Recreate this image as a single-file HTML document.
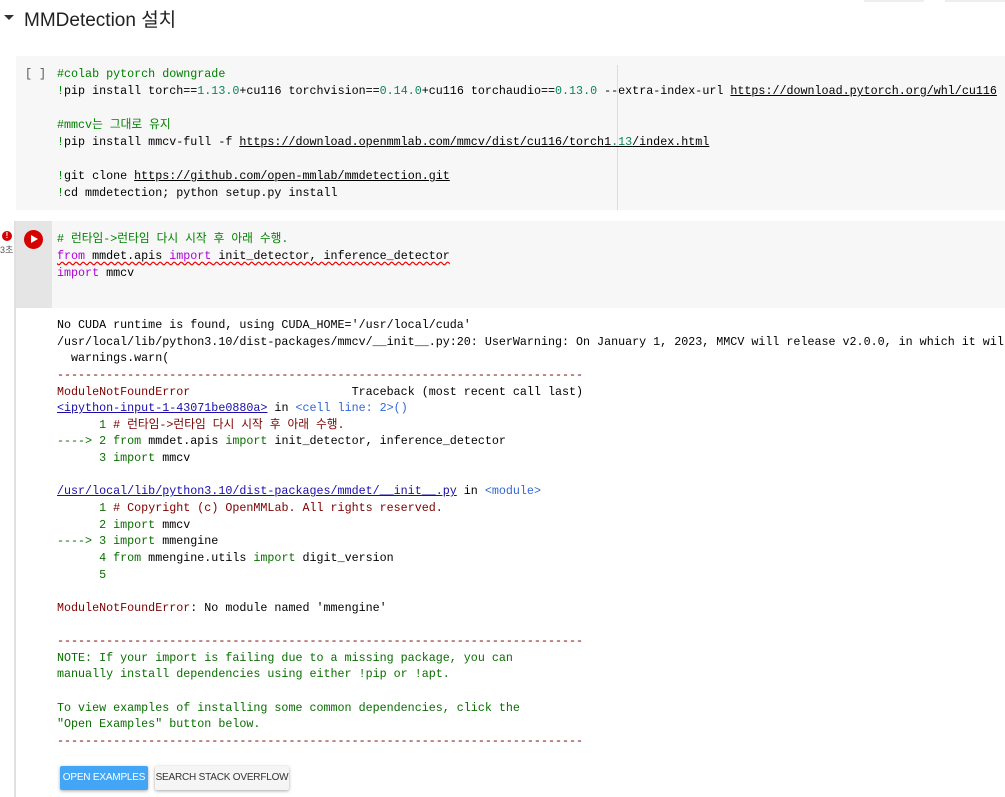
<!DOCTYPE html>
<html><head><meta charset="utf-8"><style>
body{margin:0;width:1005px;height:797px;overflow:hidden;background:#fff;position:relative;font-family:"Liberation Mono","Noto Sans CJK KR",monospace;}
.h{position:absolute;left:24px;top:5px;font:19px "Liberation Sans","Noto Sans CJK KR",sans-serif;color:#212121;}
.tri{position:absolute;left:4px;top:15px;width:0;height:0;border-left:5px solid transparent;border-right:5px solid transparent;border-top:5px solid #333;}
.c1{position:absolute;left:16px;top:56px;width:989px;height:154px;background:#f7f7f7;}
.ruler{position:absolute;left:617px;top:65px;width:1px;height:145px;background:#ddd;}
.code{position:absolute;left:57px;font-size:11.7px;color:#000;}
.code div{height:17px;line-height:17px;white-space:pre;}
.out div{height:16.65px;line-height:16.65px;}
.t{color:#098658}.g{color:#008000}.u{text-decoration:underline}
.k{color:#af00db}.b{color:#1a0dab;text-decoration:underline}.cl{color:#3367d6}.dk{color:#7b0000}
.gn{color:#0a6e00}
.c2g{position:absolute;left:16px;top:221px;width:36px;height:87px;background:#e5e5e5;}
.c2{position:absolute;left:52px;top:221px;width:953px;height:87px;background:#f7f7f7;}
.bord{position:absolute;left:14px;top:221px;width:2px;height:576px;background:#e0e0e0;}
.run{position:absolute;left:24px;top:230px;width:19px;height:19px;border-radius:50%;background:#d50000;}
.run:after{content:"";position:absolute;left:7px;top:5px;border-left:7px solid #fff;border-top:4.5px solid transparent;border-bottom:4.5px solid transparent;}
.err{position:absolute;left:2px;top:231px;width:10px;height:10px;border-radius:50%;background:#d50000;color:#fff;font:bold 8px "Liberation Sans";text-align:center;line-height:10px;}
.sq{text-decoration:underline wavy #e00;text-underline-offset:2px;}
.btn{position:absolute;top:766px;height:24px;font:10px "Liberation Sans",sans-serif;line-height:24px;text-align:center;box-shadow:0 1px 3px rgba(0,0,0,.35);border-radius:2px;white-space:nowrap;letter-spacing:-0.2px;}
</style></head><body>
<div class="tri"></div><div class="h">MMDetection 설치</div>
<div style="position:absolute;left:864px;top:0;width:60px;height:2px;background:#eee"></div>
<div style="position:absolute;left:945px;top:0;width:60px;height:2px;background:#eee"></div>
<div class="c1"></div><div class="ruler"></div>
<div class="code" style="left:25px;top:66px;color:#555"><div>[ ]</div></div>
<div class="code" style="top:66px"><div class="g">#colab pytorch downgrade</div><div><span class="g">!</span>pip install torch==<span class="t">1.13.0</span>+cu116 torchvision==<span class="t">0.14.0</span>+cu116 torchaudio==<span class="t">0.13.0</span> --extra-index-url <span class="u">https://download.pytorch.org/whl/cu116</span></div><div></div><div class="g">#mmcv는 그대로 유지</div><div><span class="g">!</span>pip install mmcv-full -f <span class="u">https://download.openmmlab.com/mmcv/dist/cu116/torch1<span class="t">.13</span>/index.html</span></div><div></div><div><span class="g">!</span>git clone <span class="u">https://github.com/open-mmlab/mmdetection.git</span></div><div><span class="g">!</span>cd mmdetection; python setup.py install</div></div>
<div class="bord"></div>
<div class="c2g"></div><div class="c2"></div>
<div class="run"></div><div class="err">!</div>
<div style="position:absolute;left:0;top:243px;font:9px 'Liberation Sans','Noto Sans CJK KR',sans-serif;color:#555">3초</div>
<div class="code" style="top:231px"><div class="g"># 런타임->런타임 다시 시작 후 아래 수행.</div><div><span class="sq"><span class="k">from</span> mmdet.apis <span class="k">import</span> init_detector, inference_detector</span></div><div><span class="k">import</span> mmcv</div></div>
<div class="code out" style="top:317px"><div>No CUDA runtime is found, using CUDA_HOME='/usr/local/cuda'</div><div>/usr/local/lib/python3.10/dist-packages/mmcv/__init__.py:20: UserWarning: On January 1, 2023, MMCV will release v2.0.0, in which it will</div><div>  warnings.warn(</div><div class="dk">---------------------------------------------------------------------------</div><div><span class="dk">ModuleNotFoundError</span>                       Traceback (most recent call last)</div><div><span class="b">&lt;ipython-input-1-43071be0880a&gt;</span> in <span class="cl">&lt;cell line: 2&gt;()</span></div><div><span class="gn">      1</span> <span class="dk"># 런타임->런타임 다시 시작 후 아래 수행.</span></div><div><span class="gn">----&gt; 2</span> <span class="gn">from</span> mmdet.apis <span class="gn">import</span> init_detector, inference_detector</div><div><span class="gn">      3 import</span> mmcv</div><div></div><div><span class="b">/usr/local/lib/python3.10/dist-packages/mmdet/__init__.py</span> in <span class="cl">&lt;module&gt;</span></div><div><span class="gn">      1</span> <span class="dk"># Copyright (c) OpenMMLab. All rights reserved.</span></div><div><span class="gn">      2 import</span> mmcv</div><div><span class="gn">----&gt; 3 import</span> mmengine</div><div><span class="gn">      4 from</span> mmengine.utils <span class="gn">import</span> digit_version</div><div><span class="gn">      5</span></div><div></div><div><span class="dk">ModuleNotFoundError</span>: No module named 'mmengine'</div><div></div><div class="dk">---------------------------------------------------------------------------</div><div class="gn">NOTE: If your import is failing due to a missing package, you can</div><div class="gn">manually install dependencies using either !pip or !apt.</div><div></div><div class="gn">To view examples of installing some common dependencies, click the</div><div class="gn">"Open Examples" button below.</div><div class="dk">---------------------------------------------------------------------------</div></div>
<div class="btn" style="left:60px;width:88px;background:#42a5f5;color:#fff">OPEN EXAMPLES</div>
<div class="btn" style="left:155px;width:134px;background:#f5f5f5;color:#333">SEARCH STACK OVERFLOW</div>
</body></html>
